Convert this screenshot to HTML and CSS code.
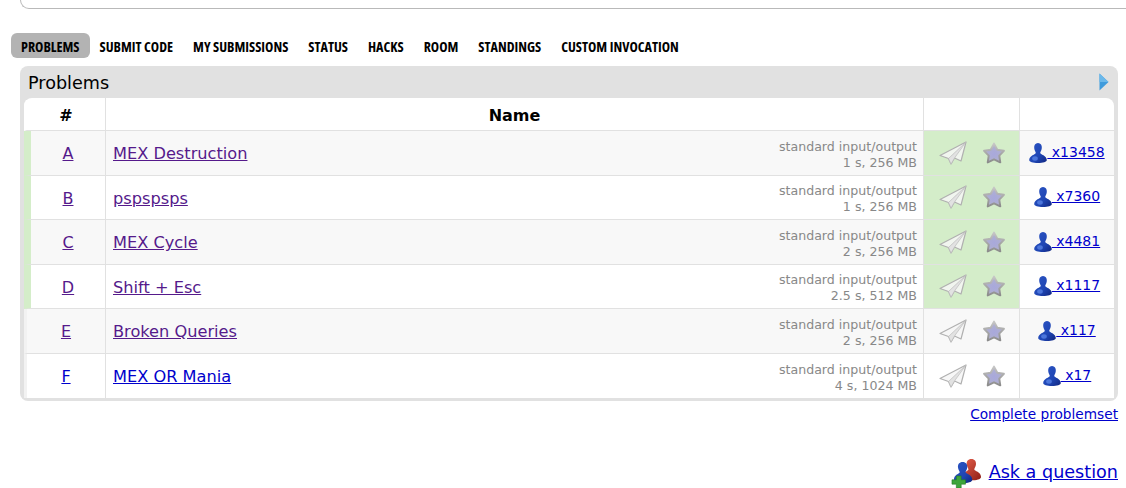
FILE: index.html
```html
<!DOCTYPE html>
<html lang="en">
<head>
<meta charset="utf-8">
<title>Problems</title>
<link rel="stylesheet" href="styles.css">
</head>
<body>
<svg class="defs" width="0" height="0" aria-hidden="true">
  <defs>
    <radialGradient id="gStar" cx=".5" cy=".55" r=".5">
      <stop offset="0" stop-color="#a8a8dc"/><stop offset=".7" stop-color="#aeaed2"/><stop offset="1" stop-color="#c0c0cc"/>
    </radialGradient>
    <linearGradient id="gRim" x1="0" y1="0" x2="0" y2="1">
      <stop offset="0" stop-color="#c6c6c6"/><stop offset="1" stop-color="#8c8c8c"/>
    </linearGradient>
    <linearGradient id="gBlue" x1="0" y1="0" x2="1" y2="1">
      <stop offset="0" stop-color="#2c55c4"/><stop offset=".6" stop-color="#1f46b4"/><stop offset="1" stop-color="#10257f"/>
    </linearGradient>
    <linearGradient id="gRed" x1="0" y1="0" x2="1" y2="1">
      <stop offset="0" stop-color="#e8604c"/><stop offset="1" stop-color="#8f1f16"/>
    </linearGradient>
    <symbol id="plane" viewBox="0 0 28 24">
      <path d="M1 14.500 27 1 22 20 15.500 17 12 23 9.500 17.500Z" fill="#f6f6f6" fill-opacity=".85" stroke="#b0b0b0" stroke-width="1.200" stroke-linejoin="round"/>
      <path d="M9.500 17.500 27 1 15.500 17 12 23Z" fill="#e2e2e2" stroke="#bbb" stroke-width=".7" stroke-linejoin="round"/>
    </symbol>
    <symbol id="star" viewBox="0 0 20 20">
      <path d="M10 1.500 13 7 19 8 14.800 12.400 15.700 18.500 10 15.700 4.300 18.500 5.200 12.400 1 8 7 7Z" fill="url(#gStar)" stroke="url(#gRim)" stroke-width="1.800" stroke-linejoin="round"/>
    </symbol>
    <symbol id="user" viewBox="0 0 18 20">
      <path d="M9 0C11.800 0 13 2.200 12.800 5 12.600 7.200 11.600 8.600 11.200 9.800 11.200 11.600 17.800 12.500 17.800 17 17.800 19 14 20 9 20S.2 19 .2 17C.2 12.500 6.800 11.600 6.800 9.800 6.400 8.600 5.400 7.200 5.200 5 5 2.200 6.200 0 9 0Z" fill="url(#gBlue)"/>
      <ellipse cx="6" cy="15.500" rx="2.800" ry="2.200" fill="#5b86e8" opacity=".75"/>
    </symbol>
  </defs>
</svg>

<div class="topbox"></div>

<nav class="tabs">
  <a class="tab active" href="#">PROBLEMS</a>
  <a class="tab" href="#">SUBMIT CODE</a>
  <a class="tab" href="#">MY SUBMISSIONS</a>
  <a class="tab" href="#">STATUS</a>
  <a class="tab" href="#">HACKS</a>
  <a class="tab" href="#">ROOM</a>
  <a class="tab" href="#">STANDINGS</a>
  <a class="tab" href="#">CUSTOM INVOCATION</a>
</nav>

<section class="panel">
  <header class="panel-head">
    <span>Problems</span>
    <svg class="arrow" width="10" height="18" viewBox="0 0 10 18"><path d="M.5 .5 9.500 9 .5 17.500Z" fill="#3f9bdc"/><path d="M.5 .5 9.500 9H.5Z" fill="#6bb8ea"/></svg>
  </header>
  <table class="problems">
    <colgroup><col class="c-id"><col class="c-name"><col class="c-act"><col class="c-users"></colgroup>
    <thead>
      <tr><th class="id">#</th><th>Name</th><th></th><th></th></tr>
    </thead>
    <tbody>
      <tr class="odd done">
        <td class="id"><a class="seen" href="#">A</a></td>
        <td><div class="name"><a class="seen" href="#">MEX Destruction</a><div class="limits">standard input/output<br>1 s, 256 MB</div></div></td>
        <td class="act"><div class="acts"><svg class="plane"><use href="#plane"/></svg><svg class="star"><use href="#star"/></svg></div></td>
        <td class="users"><a href="#"><svg class="user"><use href="#user"/></svg> x13458</a></td>
      </tr>
      <tr class="done">
        <td class="id"><a class="seen" href="#">B</a></td>
        <td><div class="name"><a class="seen" href="#">pspspsps</a><div class="limits">standard input/output<br>1 s, 256 MB</div></div></td>
        <td class="act"><div class="acts"><svg class="plane"><use href="#plane"/></svg><svg class="star"><use href="#star"/></svg></div></td>
        <td class="users"><a href="#"><svg class="user"><use href="#user"/></svg> x7360</a></td>
      </tr>
      <tr class="odd done">
        <td class="id"><a class="seen" href="#">C</a></td>
        <td><div class="name"><a class="seen" href="#">MEX Cycle</a><div class="limits">standard input/output<br>2 s, 256 MB</div></div></td>
        <td class="act"><div class="acts"><svg class="plane"><use href="#plane"/></svg><svg class="star"><use href="#star"/></svg></div></td>
        <td class="users"><a href="#"><svg class="user"><use href="#user"/></svg> x4481</a></td>
      </tr>
      <tr class="done">
        <td class="id"><a class="seen" href="#">D</a></td>
        <td><div class="name"><a class="seen" href="#">Shift + Esc</a><div class="limits">standard input/output<br>2.5 s, 512 MB</div></div></td>
        <td class="act"><div class="acts"><svg class="plane"><use href="#plane"/></svg><svg class="star"><use href="#star"/></svg></div></td>
        <td class="users"><a href="#"><svg class="user"><use href="#user"/></svg> x1117</a></td>
      </tr>
      <tr class="odd">
        <td class="id"><a class="seen" href="#">E</a></td>
        <td><div class="name"><a class="seen" href="#">Broken Queries</a><div class="limits">standard input/output<br>2 s, 256 MB</div></div></td>
        <td class="act"><div class="acts"><svg class="plane"><use href="#plane"/></svg><svg class="star"><use href="#star"/></svg></div></td>
        <td class="users"><a href="#"><svg class="user"><use href="#user"/></svg> x117</a></td>
      </tr>
      <tr>
        <td class="id"><a href="#">F</a></td>
        <td><div class="name"><a href="#">MEX OR Mania</a><div class="limits">standard input/output<br>4 s, 1024 MB</div></div></td>
        <td class="act"><div class="acts"><svg class="plane"><use href="#plane"/></svg><svg class="star"><use href="#star"/></svg></div></td>
        <td class="users"><a href="#"><svg class="user"><use href="#user"/></svg> x17</a></td>
      </tr>
    </tbody>
  </table>
</section>

<div class="complete"><a href="#">Complete problemset</a></div>

<div class="ask">
  <svg class="ask-icon" width="31" height="31" viewBox="0 0 32 30">
    <path d="M21 0C24.500 0 26 2.500 25.800 5.500 25.600 7.800 24.500 9.200 24 10.500 24 12.500 31 13 31 18.500 31 21 26 22 21 22S12 20 12 18.500C12 13 18 12.500 18 10.500 17.500 9.200 16.400 7.800 16.200 5.500 16 2.500 17.500 0 21 0Z" fill="url(#gRed)"/>
    <path d="M12 3C15.500 3 17 5.500 16.800 8.500 16.600 10.800 15.500 12.200 15 13.500 15 15.500 22 16 22 21.500 22 24 17 25 12 25S3 24 3 21.500C3 16 9 15.500 9 13.500 8.500 12.200 7.400 10.800 7.200 8.500 7 5.500 8.500 3 12 3Z" fill="url(#gBlue)"/>
    <path d="M5.500 17.500H10.500V21.500H15V26H10.500V30H5.500V26H1V21.500H5.500Z" fill="#3da53a" stroke="#1f7a22" stroke-width=".6"/>
  </svg>
  <a href="#">Ask a question</a>
</div>
</body>
</html>
```

FILE: styles.css
```css
html, body { margin: 0; padding: 0; background: #fff; }
body { width: 1126px; height: 488px; overflow: hidden; font-family: "DejaVu Sans", Verdana, sans-serif; font-size: 14px; color: #000; }
a { color: #0000cc; }
a.seen { color: #551a8b; }
.defs { display: block; height: 0; }

.topbox { height: 8px; margin-left: 20px; border-left: 1px solid #b9b9b9; border-bottom: 1px solid #b9b9b9; border-bottom-left-radius: 9px; }

.tabs { display: flex; align-items: center; margin: 24px 0 0 11px; height: 25px; }
.tab { display: block; padding: 2px 10px 0; height: 25px; box-sizing: border-box; line-height: 24px; font-family: "Open Sans", sans-serif; font-stretch: 75%; font-weight: 700; font-size: 14.05px; color: #000; text-decoration: none; white-space: nowrap; }
.tab.active { background: #b3b3b3; border-radius: 6px; }

.panel { margin: 8px 8px 0 20px; padding: 0 4px 3px; background: #e1e1e1; border-radius: 8px; }
.panel-head { display: flex; justify-content: space-between; align-items: center; height: 32px; padding: 1px 0 0 4px; box-sizing: border-box; font-size: 17.6px; }
.arrow { margin-right: 5px; margin-top: -1px; }

.problems { width: 1090px; border-collapse: separate; border-spacing: 0; table-layout: fixed; background: #fff; border-radius: 8px 8px 0 0; overflow: hidden; }
.c-id { width: 82px; }
.c-name { width: 818px; }
.c-act { width: 96px; }
.c-users { width: 94px; }
.problems th { height: 33px; padding: 2px 0 0; font-size: 16px; font-weight: 700; text-align: center; border-right: 1px solid #e1e1e1; border-bottom: 1px solid #e1e1e1; box-sizing: border-box; }
.problems th.id { border-left: 3px solid #fff; }
.problems th:last-child, .problems td:last-child { border-right: 0; }
.problems td { padding: 0; height: 44.5px; box-sizing: border-box; border-right: 1px solid #e1e1e1; border-bottom: 1px solid #e1e1e1; vertical-align: middle; }
.problems tbody tr:last-child td { border-bottom: 0; }
.odd td { background: #f8f8f8; }
.problems td.id { text-align: center; font-size: 16px; padding-top: 2px; border-left: 3px solid #f2f2f2; }
.problems .done td.id { border-left: 7px solid #d4edc9; }
.done td.act { background: #d4edc9; }

.name { display: flex; justify-content: space-between; align-items: center; padding: 2px 6px 0 7px; font-size: 16.2px; }
.limits { font-size: 12.6px; line-height: 16px; color: #888; text-align: right; padding-top: 2px; }

.acts { display: flex; justify-content: center; align-items: center; gap: 16px; }
.plane { width: 28px; height: 24px; }
.star { width: 22px; height: 22px; }

.users { text-align: center; font-size: 14px; white-space: nowrap; }
.user { width: 18px; height: 20px; vertical-align: -6px; }

.complete { margin: 5px 8px 0 0; text-align: right; font-size: 13.7px; line-height: 16px; }
.ask { display: flex; justify-content: flex-end; align-items: center; gap: 7px; margin: 32px 8px 0 0; font-size: 17.6px; line-height: 30px; }
.ask-icon { flex: none; margin-top: 4px; }
```
